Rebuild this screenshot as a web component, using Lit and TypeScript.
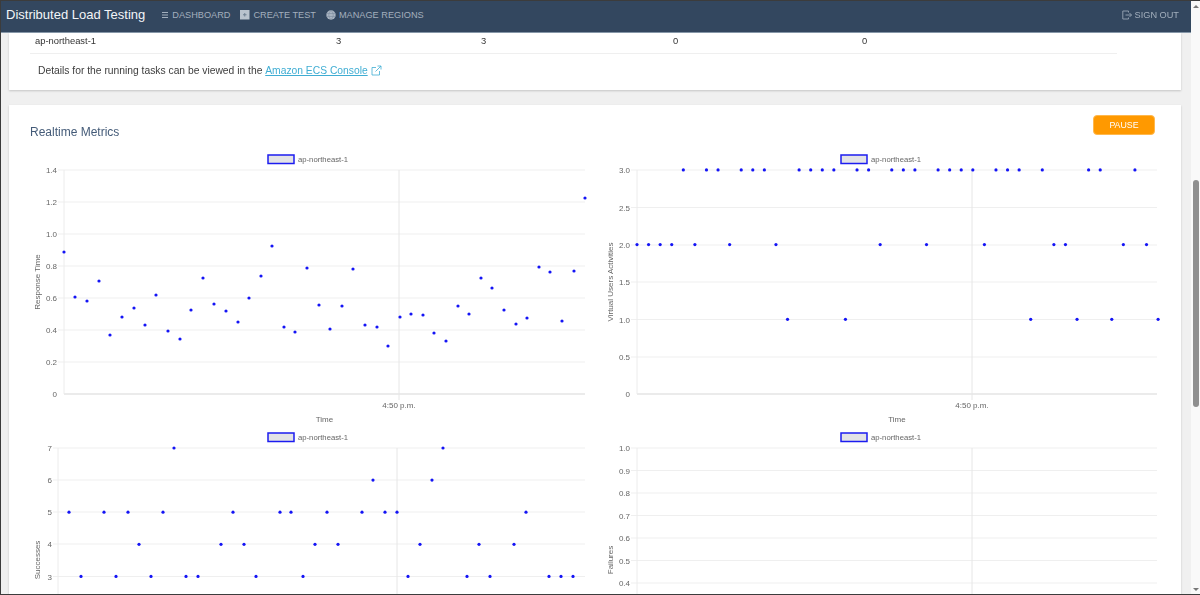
import { LitElement, html, css, svg } from "lit";
import { customElement } from "lit/decorators.js";

type Pt = [number, number];
interface ChartCfg {
  w: number; h: number; left: number; right: number; top: number; bottom: number;
  ticks: [string, number][]; vx: number; ylabel: string; ylx: number; yly: number; xaxis: boolean;
  legendX: number; pts: Pt[]; tickx: number;
}

const c1: Pt[] = [[64,252],[75,297],[87,301],[99,281],[110,335],[122,317],[134,308],[145,325],[156,295],[168,331],[180,339],[191,310],[203,278],[214,304],[226,311],[238,322],[249,298],[261,276],[272,246],[284,327],[295,332],[307,268],[319,305],[330,329],[342,306],[353,269],[365,325],[377,327],[388,346],[400,317],[411,314],[423,315],[434,333],[446,341],[458,306],[469,314],[481,278],[492,288],[504,310],[516,324],[527,318],[539,267],[550,272],[562,321],[574,271],[585,198]];
const v2 = [2,2,2,2,3,2,3,3,2,3,3,3,2,1,3,3,3,3,1,3,3,2,3,3,3,2,3,3,3,3,2,3,3,3,1,3,2,2,1,3,3,1,2,3,2,1];
const c2: Pt[] = v2.map((v, i) => [637 + i * 11.58, 394 - v * 74.7]);
const v3: Pt[] = [[69,5],[81,3],[104,5],[116,3],[128,5],[139,4],[151,3],[163,5],[174,7],[186,3],[198,3],[221,4],[233,5],[244,4],[256,3],[280,5],[291,5],[303,3],[315,4],[327,5],[338,4],[362,5],[373,6],[385,5],[397,5],[408,3],[420,4],[432,6],[443,7],[467,3],[479,4],[490,3],[514,4],[526,5],[549,3],[561,3],[573,3]];
const c3: Pt[] = v3.map(([x, v]) => [x, 448 + (7 - v) * 32.1]);

const charts: ChartCfg[] = [
  { w: 563, h: 270, left: 64, right: 585, top: 170, bottom: 394, tickx: 58,
    ticks: [["1.4",170],["1.2",202],["1.0",234],["0.8",266],["0.6",298],["0.4",330],["0.2",362],["0",394]],
    vx: 399, ylabel: "Response Time", ylx: 37, yly: 282, xaxis: true, legendX: 296, pts: c1 },
  { w: 563, h: 270, left: 637, right: 1157, top: 170, bottom: 394, tickx: 631,
    ticks: [["3.0",170],["2.5",207.5],["2.0",245],["1.5",282],["1.0",319.5],["0.5",357],["0",394]],
    vx: 972, ylabel: "Virtual Users Activities", ylx: 610, yly: 282, xaxis: true, legendX: 869, pts: c2 },
  { w: 563, h: 170, left: 58, right: 585, top: 448, bottom: 640, tickx: 53,
    ticks: [["7",448],["6",480],["5",512],["4",544],["3",576.5]],
    vx: 397, ylabel: "Successes", ylx: 37, yly: 560, xaxis: false, legendX: 296, pts: c3 },
  { w: 563, h: 170, left: 637, right: 1157, top: 448, bottom: 640, tickx: 631,
    ticks: [["1.0",448],["0.9",470.5],["0.8",493],["0.7",515.5],["0.6",538],["0.5",560.5],["0.4",583]],
    vx: 972, ylabel: "Failures", ylx: 610, yly: 560, xaxis: false, legendX: 869, pts: [] },
];

@customElement("metric-chart")
export class MetricChart extends LitElement {
  static properties = { cfg: { attribute: false }, x0: { type: Number }, y0: { type: Number } };
  cfg!: ChartCfg; x0 = 0; y0 = 0;
  static styles = css`
    :host { display: block; }
    svg { display: block; overflow: visible; }
    text { font-family: "Liberation Sans", Arial, sans-serif; font-size: 8px; fill: #666; }
    .legend { font-size: 7.7px; }
  `;
  render() {
    const c = this.cfg;
    const vb = `${this.x0} ${this.y0} ${c.w} ${c.h}`;
    return html`<svg width=${c.w} height=${c.h} viewBox=${vb}>
      <rect x=${c.legendX - 28} y=${c.top - 15} width="26" height="8.5" fill="#e3e3e6" stroke="#1c1cf0" stroke-width="1.5"></rect>
      <text class="legend" x=${c.legendX + 2} y=${c.top - 8}>ap-northeast-1</text>
      ${c.ticks.map(([t, y]) => svg`
        <line x1=${t === "0" ? c.left : c.tickx} x2=${c.right} y1=${y} y2=${y} stroke=${t === "0" ? "#e4e4e4" : "#efefef"} stroke-width=${t === "0" ? 1.4 : 1}></line>
        <text x=${c.tickx - 1} y=${y + 3} text-anchor="end">${t}</text>`)}
      <line x1=${c.left} x2=${c.left} y1=${c.top} y2=${c.bottom} stroke="#ececec"></line>
      <line x1=${c.vx} x2=${c.vx} y1=${c.top} y2=${c.bottom + (c.xaxis ? 6 : 0)} stroke="#e6e6e6"></line>
      ${c.xaxis ? svg`
        <text x=${c.vx} y=${c.bottom + 14} text-anchor="middle">4:50 p.m.</text>
        <text x=${(c.left + c.right) / 2} y=${c.bottom + 28} text-anchor="middle">Time</text>` : ""}
      <text transform="translate(${c.ylx + 2.5} ${c.yly}) rotate(-90)" text-anchor="middle">${c.ylabel}</text>
      ${c.pts.map(([x, y]) => svg`<circle cx=${x} cy=${y} r="1.6" fill="#1414f5"></circle>`)}
    </svg>`;
  }
}

@customElement("app-root")
export class AppRoot extends LitElement {
  static styles = css`
    :host { display: block; width: 1200px; height: 595px; overflow: hidden; font-family: "Liberation Sans", Arial, sans-serif; }
    .frame { width: 1200px; height: 595px; box-sizing: border-box; border: 1px solid #3c3c3c; border-right: 0; display: flex; background: #f0f0f0; }
    .main { width: 1190px; flex: none; display: flex; flex-direction: column; overflow: hidden; filter: blur(0.45px); }
    header { height: 32px; flex: none; box-sizing: border-box; background: #33475f; border-bottom: 1px solid #8697a8; display: flex; align-items: center; color: #fff; padding: 0 12px 4px 5px; }
    .brand { font-size: 13px; color: #f2f5f8; margin-right: 16px; }
    nav { display: flex; gap: 10px; flex: 1; }
    .nl { display: flex; align-items: center; gap: 3px; font-size: 9.2px; color: #a3afbd; }
    .nl svg { display: block; }
    .body { flex: 1; padding: 0 10px 0 8px; overflow: hidden; min-height: 0; }
    .card { background: #fff; box-shadow: 0 1px 2px rgba(0,0,0,.18); }
    .top { height: 57px; padding: 0 21px; margin-bottom: 15px; }
    .row { height: 21px; box-sizing: border-box; display: grid; grid-template-columns: 301px 145px 192px 189px 1fr; align-items: center; border-bottom: 1px solid #efefef; font-size: 9.4px; color: #333; padding: 0 0 6px 5px; margin-right: 43px; }
    .note { font-size: 10.3px; color: #3d3d3d; padding: 11px 8px; display: flex; align-items: center; white-space: pre; }
    .note a { color: #3fadd3; text-decoration: underline; }
    .note svg { margin-left: 3px; display: block; }
    .metrics { height: 500px; padding: 0 21px; }
    .mhead { display: flex; justify-content: space-between; align-items: flex-start; padding: 10px 5px 0 0; height: 45px; box-sizing: border-box; }
    h2 { margin: 10px 0 0; font-size: 12px; font-weight: 400; color: #445b78; }
    button { width: 62px; height: 20px; border: 1px solid #ffb84d; border-radius: 4px; background: #ff9900; color: #fff; font: 8.8px "Liberation Sans", Arial, sans-serif; padding: 0; }
    .grid { display: grid; grid-template-columns: 563px 563px; gap: 8px 10px; }
    .scroll { flex: 1; position: relative; background: #f9f9f9; }
    .up { position: absolute; top: 4px; left: 50%; margin-left: -3px; border: 3px solid transparent; border-top: 0; border-bottom: 3px solid #777; }
    .down { position: absolute; bottom: 3px; left: 50%; margin-left: -3px; border: 3px solid transparent; border-bottom: 0; border-top: 3px solid #777; }
    .thumb { position: absolute; top: 179px; left: 1.5px; width: 6px; height: 227px; background: #8f8f8f; border-radius: 3px; }
  `;
  render() {
    return html`<div class="frame">
      <div class="main">
        <header>
          <div class="brand">Distributed Load Testing</div>
          <nav>
            <div class="nl"><svg width="8" height="8" viewBox="0 0 8 8"><path d="M1 1.500h6M1 4h6M1 6.500h6" stroke="#a3afbd" stroke-width="1"/></svg>DASHBOARD</div>
            <div class="nl"><svg width="10" height="10" viewBox="0 0 10 10"><rect width="9.500" height="9.500" fill="#b9c3ce"/><path d="M4.750 3v3.500M3 4.750h3.500" stroke="#6f8092" stroke-width="1"/></svg>CREATE TEST</div>
            <div class="nl"><svg width="10" height="10" viewBox="0 0 10 10"><circle cx="5" cy="5" r="4.700" fill="#a9b4c1"/><path d="M.5 3.500h9M.5 6.500h9M5 .5c-3 3-3 6 0 9M5 .5c3 3 3 6 0 9" fill="none" stroke="#7c8c9e" stroke-width=".6"/></svg>MANAGE REGIONS</div>
          </nav>
          <div class="nl"><svg width="10" height="10" viewBox="0 0 10 10"><path d="M6.500 2.500V1H.8v8h5.700V7.500M3.500 5h6M7.500 3l2 2-2 2" fill="none" stroke="#8f9dad" stroke-width="1"/></svg>SIGN OUT</div>
        </header>
        <div class="body">
          <div class="card top">
            <div class="row"><span>ap-northeast-1</span><span>3</span><span>3</span><span>0</span><span>0</span></div>
            <div class="note">Details for the running tasks can be viewed in the <a>Amazon ECS Console</a><svg width="11" height="11" viewBox="0 0 11 11"><path d="M8.500 6v4H1V2.500h4M4.500 6.500 10 1M6.500 1H10v3.500" fill="none" stroke="#3fadd3" stroke-width=".8"/></svg></div>
          </div>
          <div class="card metrics">
            <div class="mhead"><h2>Realtime Metrics</h2><button>PAUSE</button></div>
            <div class="grid">
              ${charts.map((c, i) => html`<metric-chart .cfg=${c} .x0=${i % 2 ? 603 : 30} .y0=${i < 2 ? 150 : 428}></metric-chart>`)}
            </div>
          </div>
        </div>
      </div>
      <div class="scroll"><div class="up"></div><div class="thumb"></div><div class="down"></div></div>
    </div>`;
  }
}
